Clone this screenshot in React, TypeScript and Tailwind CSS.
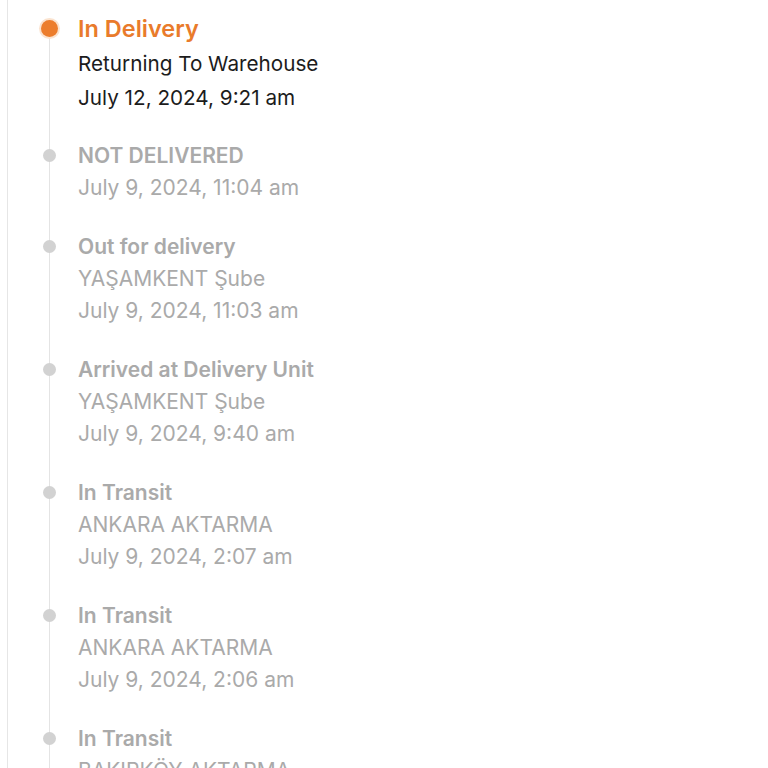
import React from 'react';

interface TrackingEvent {
  status: string;
  location?: string;
  date: string;
}

const events: TrackingEvent[] = [
  { status: 'In Delivery', location: 'Returning To Warehouse', date: 'July 12, 2024, 9:21 am' },
  { status: 'NOT DELIVERED', date: 'July 9, 2024, 11:04 am' },
  { status: 'Out for delivery', location: 'YAŞAMKENT Şube', date: 'July 9, 2024, 11:03 am' },
  { status: 'Arrived at Delivery Unit', location: 'YAŞAMKENT Şube', date: 'July 9, 2024, 9:40 am' },
  { status: 'In Transit', location: 'ANKARA AKTARMA', date: 'July 9, 2024, 2:07 am' },
  { status: 'In Transit', location: 'ANKARA AKTARMA', date: 'July 9, 2024, 2:06 am' },
  { status: 'In Transit', location: 'BAKIRKÖY AKTARMA', date: 'July 8, 2024, 11:52 pm' },
];

const App: React.FC = () => {
  return (
    <div className="h-screen overflow-hidden bg-white font-['Inter','Liberation_Sans',sans-serif] text-[21px]">
      <div className="ml-[7px] h-full border-l border-[#e6e6e6]">
        <div className="relative flex flex-col pt-[11px]">
          {/* Timeline rail */}
          <div className="absolute left-[41px] top-[28px] bottom-0 w-px bg-[#e4e4e4]" />

          {events.map((ev, index) => {
            const current = index === 0;
            return (
              <div
                key={index}
                className={`relative flex items-start ${index === 0 ? '' : index === 1 ? 'mt-[25px]' : 'mt-[27px]'}`}
              >
                {/* Dot */}
                {current ? (
                  <div className="w-[70px] shrink-0 pl-[33px] pt-[9px]">
                    <div className="w-[17px] h-[17px] rounded-full bg-[#ec7d2c] ring-2 ring-[#fbe3cf]" />
                  </div>
                ) : (
                  <div className="w-[70px] shrink-0 pl-[35px] pt-[9px]">
                    <div className="w-[13px] h-[13px] rounded-full bg-[#d2d2d2]" />
                  </div>
                )}

                {/* Text */}
                {current ? (
                  <div className="flex flex-col">
                    <div className="text-[23.5px] leading-[36px] font-semibold text-[#e97b2b]">{ev.status}</div>
                    <div className="text-[20.7px] leading-[34px] text-[#1c1c1c]">{ev.location}</div>
                    <div className="text-[20.7px] leading-[34px] text-[#1c1c1c]">{ev.date}</div>
                  </div>
                ) : (
                  <div className="flex flex-col leading-[32px] text-[#aaaaaa]">
                    <div className="font-semibold">{ev.status}</div>
                    {ev.location && <div>{ev.location}</div>}
                    <div>{ev.date}</div>
                  </div>
                )}
              </div>
            );
          })}
        </div>
      </div>
    </div>
  );
};

export default App;
